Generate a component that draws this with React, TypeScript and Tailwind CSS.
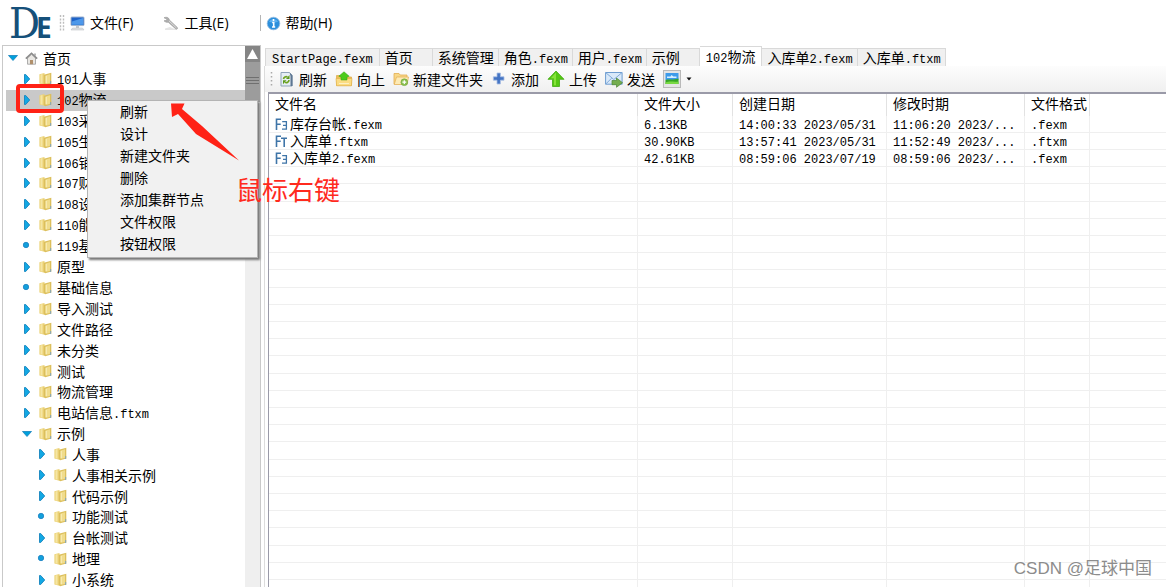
import { type ReactNode, useState } from "react"
import clsx from "clsx"

type TreeNode = { name: string; level: number; state: "open" | "closed" | "leaf" }

const treeNodes: TreeNode[] = [
  { name: "首页", level: 0, state: "open" },
  { name: "101人事", level: 1, state: "closed" },
  { name: "102物流", level: 1, state: "closed" },
  { name: "103采", level: 1, state: "closed" },
  { name: "105生", level: 1, state: "closed" },
  { name: "106销", level: 1, state: "closed" },
  { name: "107财", level: 1, state: "closed" },
  { name: "108设", level: 1, state: "closed" },
  { name: "110能", level: 1, state: "closed" },
  { name: "119基", level: 1, state: "leaf" },
  { name: "原型", level: 1, state: "closed" },
  { name: "基础信息", level: 1, state: "leaf" },
  { name: "导入测试", level: 1, state: "closed" },
  { name: "文件路径", level: 1, state: "closed" },
  { name: "未分类", level: 1, state: "closed" },
  { name: "测试", level: 1, state: "closed" },
  { name: "物流管理", level: 1, state: "closed" },
  { name: "电站信息.ftxm", level: 1, state: "closed" },
  { name: "示例", level: 1, state: "open" },
  { name: "人事", level: 2, state: "closed" },
  { name: "人事相关示例", level: 2, state: "closed" },
  { name: "代码示例", level: 2, state: "closed" },
  { name: "功能测试", level: 2, state: "leaf" },
  { name: "台帐测试", level: 2, state: "closed" },
  { name: "地理", level: 2, state: "leaf" },
  { name: "小系统", level: 2, state: "closed" },
]

const tabs = [
  "StartPage.fexm",
  "首页",
  "系统管理",
  "角色.fexm",
  "用户.fexm",
  "示例",
  "102物流",
  "入库单2.fexm",
  "入库单.ftxm",
]

const files = [
  { name: "库存台帐.fexm", size: "6.13KB", created: "14:00:33 2023/05/31", modified: "11:06:20 2023/...", type: ".fexm" },
  { name: "入库单.ftxm", size: "30.90KB", created: "13:57:41 2023/05/31", modified: "11:52:49 2023/...", type: ".ftxm" },
  { name: "入库单2.fexm", size: "42.61KB", created: "08:59:06 2023/07/19", modified: "08:59:06 2023/...", type: ".fexm" },
]

const contextItems = ["刷新", "设计", "新建文件夹", "删除", "添加集群节点", "文件权限", "按钮权限"]

const indents = ["pl-px", "pl-[15px]", "pl-[30px]"]

// Latin runs use the narrow mono face, Chinese runs the larger one
function Label({ text, className }: { text: string; className?: string }) {
  const parts = text.split(/([\x20-\x7e]+)/).filter(Boolean)
  return (
    <span className={clsx("whitespace-pre", className)}>
      {parts.map((part, i) => (
        <span
          key={i}
          className={
            /^[\x20-\x7e]/.test(part)
              ? "font-['Liberation_Mono',monospace] text-[12px]"
              : "font-['Noto_Sans_CJK_SC',sans-serif] text-[14px]"
          }
        >
          {part}
        </span>
      ))}
    </span>
  )
}

function Toggle({ state }: { state: TreeNode["state"] }) {
  return (
    <svg width="12" height="12" viewBox="0 0 12 12" className="shrink-0" aria-hidden="true">
      {state === "open" && <path d="M1.5 3.5h9L6 8.5z" fill="#00a0dc" stroke="#1583bd" strokeWidth="0.8" strokeLinejoin="round" />}
      {state === "closed" && <path d="M3.5 1.5v9h1.2l4-4.5-4-4.5z" fill="#12a8e4" stroke="#1583bd" strokeWidth="0.9" strokeLinejoin="round" />}
      {state === "leaf" && <circle cx="5" cy="5" r="2.7" fill="#12a0dc" stroke="#1b7fc0" strokeWidth="0.8" />}
    </svg>
  )
}

function FolderIcon() {
  return (
    <svg width="13" height="14" viewBox="0 0 13 14" className="shrink-0" aria-hidden="true">
      <path d="M.4 2.2 5.500 1v11.800L.4 11.500z" fill="#ecd276" />
      <path d="M1.500 2.500 3.500 2v9.800l-2-.5z" fill="#f5e6a4" />
      <path d="M4.800 2.800 12.300.8v10.600l-6 1.900-1.500-1z" fill="#dcbf5c" />
      <path d="M6.600 3.400 11 2.200v8.500l-4.400 1.400z" fill="#f0dc8c" />
      <path d="M7.200 4v7" stroke="#faf1c2" />
      <path d="M11.600 9v3" stroke="#8fa9ae" strokeWidth="1.2" />
    </svg>
  )
}

function HomeIcon() {
  return (
    <svg width="13" height="13" viewBox="0 0 13 13" className="shrink-0" aria-hidden="true">
      <path d="M2.5 6v6.2h8V6L6.5 2.4z" fill="#e9e7e3" stroke="#9a9a9a" strokeWidth="0.8" />
      <path d="M.8 6.6 6.5 1.2l5.7 5.4" fill="none" stroke="#8a8a8a" strokeWidth="1.5" />
      <path d="M10 1.5v2.2" stroke="#999" strokeWidth="1.4" />
      <path d="M5 8h3v4.2H5z" fill="#b0906c" />
    </svg>
  )
}

function FileIcon({ type }: { type: string }) {
  return (
    <svg width="13" height="13" viewBox="0 0 13 13" className="shrink-0" fill="none" stroke="#3f75a8" strokeWidth="1.6" aria-hidden="true">
      <path d="M1.5 12V1.3H6M1.5 6.2h4.2" />
      {type === ".ftxm" ? <path d="M6 3.2h6M9.2 3.2V12" /> : <path d="M7.2 3.6h4.2v7.6H7M8 7.3h3.2" strokeWidth="1.3" />}
    </svg>
  )
}

function Grip() {
  return (
    <svg width="6" height="16" viewBox="0 0 6 16" className="shrink-0" aria-hidden="true">
      <path d="M1.5 0v16M4.5 0v16" stroke="#bdbdbd" strokeWidth="1.4" strokeDasharray="2 1.4" />
    </svg>
  )
}

function MenuButton({ icon, label }: { icon: ReactNode; label: string }) {
  return (
    <button className="flex items-center gap-[5px] font-['Open_Sans','Noto_Sans_CJK_SC',sans-serif] text-[14px] leading-5 whitespace-nowrap">
      {icon}
      {label}
    </button>
  )
}

function ToolButton({ icon, label }: { icon: ReactNode; label: string }) {
  return (
    <button className="flex items-center gap-1 text-[14px] leading-5 whitespace-nowrap">
      {icon}
      {label}
    </button>
  )
}

function MenuBar() {
  return (
    <header className="flex h-[46px] shrink-0 items-center pl-[9px]">
      <div className="flex h-11 w-[42px] shrink-0 items-baseline text-[#15507a]">
        <span className="font-['DejaVu_Serif_Condensed','DejaVu_Serif',serif] text-[43px] leading-[44px]">D</span>
        <span className="-ml-1 font-['Open_Sans',sans-serif] text-[28px] leading-[44px] font-bold">E</span>
      </div>
      <nav className="flex items-center pl-2">
        <Grip />
        <div className="pl-[5px]">
          <MenuButton
            label="文件(F)"
            icon={
              <svg width="15" height="15" viewBox="0 0 15 15" aria-hidden="true">
                <rect x="1" y="1" width="13" height="8.6" rx="0.8" fill="#1e63c8" stroke="#9fb4cf" />
                <path d="M2 8.8V5.6L13 2v6.8z" fill="#4d98ea" />
                <path d="M6 10h3v2H6z" fill="#c4c8cd" />
                <path d="M2.5 12h10l1.5 2H1z" fill="#dfe1e4" stroke="#b5b9be" strokeWidth="0.5" />
              </svg>
            }
          />
        </div>
        <div className="pl-[30px]">
          <MenuButton
            label="工具(E)"
            icon={
              <svg width="16" height="16" viewBox="0 0 16 16" aria-hidden="true">
                <path d="M2 13.5 7 12l7 3H2z" fill="#e5e5e5" />
                <path d="M1 2.800c2-1 4.800-.6 5.300 2.100l8 7.600c.7 1-.5 2.200-1.500 1.500L5.300 7.200C3.800 7.600 2 6.900 1 5.800l2.600-.4.3-1.400z" fill="#b0b0b0" stroke="#8f8f8f" strokeWidth="0.6" />
                <path d="m6 6 7.5 7" stroke="#e4e4e4" strokeWidth="0.8" />
              </svg>
            }
          />
        </div>
        <div className="ml-[31px] h-4 w-px bg-[#b5b5b5]" />
        <div className="pl-[5px]">
          <MenuButton
            label="帮助(H)"
            icon={
              <svg width="15" height="15" viewBox="0 0 15 15" aria-hidden="true">
                <circle cx="7.5" cy="7.5" r="6.3" fill="#2b8fdc" stroke="#8fb9de" strokeWidth="0.8" />
                <path d="M3 5.5a5 4 0 0 1 9 0c-2 1.5-7 1.5-9 0z" fill="#5db0ee" />
                <path d="M7.5 3v2M6.2 6.5h1.5v4.2M6 11h3.2" fill="none" stroke="#fff" strokeWidth="1.6" />
              </svg>
            }
          />
        </div>
      </nav>
    </header>
  )
}

function TreePanel({ selected, onSelect }: { selected: string; onSelect: (name: string) => void }) {
  return (
    <aside className="-mt-px ml-0.5 flex w-[259px] shrink-0 border-t border-r border-l border-[#c9c9c9]">
      <ul className="-mb-[3px] flex min-w-0 flex-1 flex-col pt-0.5 pl-[3px]">
        {treeNodes.map((node) => (
          <li key={node.name + node.level} className="h-[21px] min-h-0">
            <button
              onClick={() => onSelect(node.name)}
              className={clsx(
                "flex h-full w-full items-center text-left",
                indents[node.level],
                node.name === selected && "bg-[#c9c9c9]",
              )}
            >
              <Toggle state={node.state} />
              <span className="pr-[5px] pl-1.5">{node.level === 0 ? <HomeIcon /> : <FolderIcon />}</span>
              <Label text={node.name} className="pb-[3px]" />
            </button>
          </li>
        ))}
      </ul>
      {/* Scrollbar */}
      <div className="flex w-[15px] shrink-0 flex-col bg-[#efefef]">
        <div className="flex h-4 items-center justify-center bg-[#858585]">
          <svg width="11" height="10" viewBox="0 0 11 10" aria-hidden="true">
            <path d="M5.5 0 11 10H0z" fill="#fff" />
          </svg>
        </div>
        <div className="flex h-10 flex-col items-center gap-0.5 bg-[#9c9c9c] pt-[15px]">
          <span className="h-px w-[13px] bg-[#6f6f6f]" />
          <span className="h-px w-[13px] bg-[#6f6f6f]" />
          <span className="h-px w-[13px] bg-[#6f6f6f]" />
        </div>
      </div>
    </aside>
  )
}

function Toolbar() {
  return (
    <div className="flex h-[26px] shrink-0 items-center bg-linear-to-b from-[#fdfdfd] to-[#f0f0f0] pl-[5px]">
      <svg width="3" height="14" viewBox="0 0 3 14" aria-hidden="true">
        <path d="M1.5 0v14" stroke="#a9a9a9" strokeWidth="1.5" strokeDasharray="1.5 2.5" />
      </svg>
      <div className="flex items-center gap-2 pl-1.5">
        <ToolButton
          label="刷新"
          icon={
            <svg width="16" height="16" viewBox="0 0 16 16" aria-hidden="true">
              <path d="M2 1.5h8.500L13 4v11H2z" fill="#e6eef5" stroke="#8fa3b8" />
              <path d="M10.500 1.500 13.500 4.500V15H11.500V5z" fill="#5d7692" />
              <path d="M4.500 8A2.800 2.800 0 0 1 8.500 6M10 9a2.800 2.800 0 0 1-4 2.300" fill="none" stroke="#6fa41f" strokeWidth="1.700" />
              <path d="M10.500 4v4H7zM4 13.200V9.300h3.500z" fill="#5c9a1c" />
            </svg>
          }
        />
        <ToolButton
          label="向上"
          icon={
            <svg width="18" height="16" viewBox="0 0 18 16" aria-hidden="true">
              <path d="M1.5 4.5h4l1 1.5h10v8.5h-15z" fill="#f0bf55" stroke="#dba748" strokeWidth="0.7" />
              <path d="M1 7.5h16l-.6 7.300H1.600z" fill="#fbdc83" stroke="#e3b350" strokeWidth="0.7" />
              <path d="M9 .8 3.800 5.200 6 6v3h6V6l2.200-.8z" fill="#4ccb1a" stroke="#35a512" strokeWidth="0.5" />
              <path d="M4 12.500h10" stroke="#fdf0c4" />
            </svg>
          }
        />
        <ToolButton
          label="新建文件夹"
          icon={
            <svg width="16" height="16" viewBox="0 0 16 16" aria-hidden="true">
              <path d="M1 2.500h5l1.200 1.500H14v9H1z" fill="#f8d888" stroke="#e3ad50" strokeWidth="0.8" />
              <path d="M3.500 6h12L14 13.5H1.2z" fill="#fdeab5" stroke="#e3ad50" strokeWidth="0.7" />
              <circle cx="11.3" cy="11.2" r="3.400" fill="#8cc152" stroke="#6fa43c" strokeWidth="0.6" />
              <path d="M11.3 9.3v3.8M9.400 11.200h3.800" stroke="#fff" strokeWidth="1.2" />
            </svg>
          }
        />
        <ToolButton
          label="添加"
          icon={
            <svg width="16" height="14" viewBox="0 0 16 14" aria-hidden="true">
              <path d="M6 1h3.4v3.8H13v3.4H9.4V12H6V8.2H2.4V4.8H6z" fill="#4474c4" stroke="#a9bfe4" strokeWidth="0.8" />
            </svg>
          }
        />
        <ToolButton
          label="上传"
          icon={
            <svg width="18" height="18" viewBox="0 0 18 18" aria-hidden="true">
              <path d="M9 1 1 9.300h4.500v7.200h7V9.300H17z" fill="#55c814" stroke="#43ab12" strokeWidth="0.8" strokeLinejoin="round" />
              <path d="M9 2.600 3.800 8.300H7v7h2z" fill="#86e23a" />
            </svg>
          }
        />
        <ToolButton
          label="发送"
          icon={
            <svg width="18" height="17" viewBox="0 0 18 17" aria-hidden="true">
              <path d="M.6 1.5h16.5v11.7H.6z" fill="#d9e9f9" stroke="#6d9cd0" />
              <path d="m.6 1.5 8.2 7 8.300-7M.6 13.2l6-6M17 13.2l-6-6" fill="none" stroke="#7fa9d8" />
              <path d="M7 9.500h4.500V7l6 4.700-6 4.600v-2.600H7z" fill="#74ad4f" stroke="#4d8633" strokeWidth="0.7" />
            </svg>
          }
        />
        <button className="flex items-center gap-[5px]" aria-label="View">
          <svg width="18" height="18" viewBox="0 0 18 18" aria-hidden="true">
            <rect x="0.5" y="0.5" width="17" height="17" fill="#e5e5e5" stroke="#b9b9b9" />
            <path d="M2.5 3h13v7h-13z" fill="#3d9bea" />
            <path d="M4 6.500h3.500l1-1.500 2 1.500h3v1.500H4z" fill="#d7efff" />
            <path d="M2.5 10c4-1.500 6 .5 13-1.500v5.500h-13z" fill="#35a625" />
            <path d="M2.5 12.500c5-2 8 0 13-1v2.500h-13z" fill="#79d943" />
          </svg>
          <svg width="6" height="4" viewBox="0 0 6 4" aria-hidden="true">
            <path d="M.5.5h5L3 3.5z" fill="#111" />
          </svg>
        </button>
      </div>
    </div>
  )
}

function FileTable() {
  return (
    <div className="ml-[3px] min-h-0 flex-1 overflow-hidden border-t-2 border-l border-[#9a9aa8]">
      <table className="w-full table-fixed border-separate border-spacing-0 text-left [&_td]:border-r [&_td]:border-b [&_td]:border-[#efefef] [&_td]:py-0 [&_td]:pr-0 [&_td]:pl-1.5 [&_td]:leading-4 [&_td]:whitespace-nowrap [&_td:last-child]:border-r-0 [&_th]:border-r [&_th]:border-[#e2e2e2] [&_th]:py-0 [&_th]:pr-0 [&_th]:pl-1.5 [&_th]:leading-4 [&_th]:font-normal [&_th]:whitespace-nowrap [&_th:last-child]:border-r-0">
        <thead>
          <tr className="h-[22px] align-top">
            <th className="w-[369px]"><Label text="文件名" /></th>
            <th className="w-[95px]"><Label text="文件大小" /></th>
            <th className="w-[154px]"><Label text="创建日期" /></th>
            <th className="w-[138px]"><Label text="修改时期" /></th>
            <th className="w-[65px]"><Label text="文件格式" /></th>
            <th aria-hidden="true" />
          </tr>
        </thead>
        <tbody className="[&>tr]:h-[17px] [&>tr:nth-child(5n)]:h-[18px]">
          {files.map((file) => (
            <tr key={file.name}>
              <td>
                <div className="flex h-4 items-center gap-0.5">
                  <FileIcon type={file.type} />
                  <Label text={file.name} />
                </div>
              </td>
              <td><div className="flex h-4 items-center"><Label text={file.size} /></div></td>
              <td><div className="flex h-4 items-center"><Label text={file.created} /></div></td>
              <td><div className="flex h-4 items-center"><Label text={file.modified} /></div></td>
              <td><div className="flex h-4 items-center"><Label text={file.type} /></div></td>
              <td />
            </tr>
          ))}
          {/* blank grid lines below the files */}
          {Array.from({ length: 25 }, (_, i) => (
            <tr key={i}>
              <td />
              <td />
              <td />
              <td />
              <td />
              <td />
            </tr>
          ))}
        </tbody>
      </table>
    </div>
  )
}

function ContextMenu() {
  return (
    <div
      role="menu"
      className="absolute top-[100px] left-[87px] w-[171px] border border-[#b4b4b4] bg-[#f1f1f1] py-px shadow-[2px_2px_2px_#777]"
    >
      {contextItems.map((item) => (
        <button key={item} role="menuitem" className="flex h-[22px] w-full items-center pb-[3px] pl-8 text-[14px] hover:bg-[#dcecfa]">
          {item}
        </button>
      ))}
    </div>
  )
}

export default function App() {
  const [selected, setSelected] = useState("102物流")
  const [activeTab, setActiveTab] = useState("102物流")

  return (
    <div className="relative flex h-screen flex-col overflow-hidden bg-white font-['Noto_Sans_CJK_SC',sans-serif] text-black">
      <MenuBar />
      <div className="flex min-h-0 flex-1">
        <TreePanel selected={selected} onSelect={setSelected} />
        <main className="flex min-w-0 flex-1 flex-col pl-[3px]">
          <div className="flex h-5 shrink-0 items-end pl-px">
            {tabs.map((tab) => (
              <button
                key={tab}
                onClick={() => setActiveTab(tab)}
                className={clsx(
                  "flex min-w-[53px] items-center border-t border-r border-[#d9d9d9] first:border-l",
                  tab === activeTab ? "h-5 bg-white px-1.5" : "h-[18px] bg-[#f0f0f0] pr-1 pl-[5px] first:px-1.5",
                )}
              >
                <Label text={tab} className="pb-[3px]" />
              </button>
            ))}
          </div>
          <div className="flex min-h-0 flex-1 flex-col border-l border-[#dcdcdc]">
            <Toolbar />
            <FileTable />
          </div>
        </main>
      </div>

      <ContextMenu />

      {/* Annotations */}
      <div className="pointer-events-none absolute top-[84px] left-4 h-[29px] w-12 rounded border-4 border-[#ff2216]" />
      <svg width="70" height="60" viewBox="0 0 70 60" className="pointer-events-none absolute top-[102px] left-[170px]" aria-hidden="true">
        <path d="M1 1.500h13.500L12 7l20 17 37 34.500L26 32 8 12 2 15z" fill="#ff2216" />
      </svg>
      <p className="pointer-events-none absolute top-[173px] left-[236px] text-[26px] leading-8 text-[#ff2a1e]">鼠标右键</p>
      <p className="pointer-events-none absolute right-3.5 bottom-1.5 font-['Liberation_Sans','Noto_Sans_CJK_SC',sans-serif] text-[17px] leading-6 text-[#8c8c8c]">
        CSDN @足球中国
      </p>
    </div>
  )
}
